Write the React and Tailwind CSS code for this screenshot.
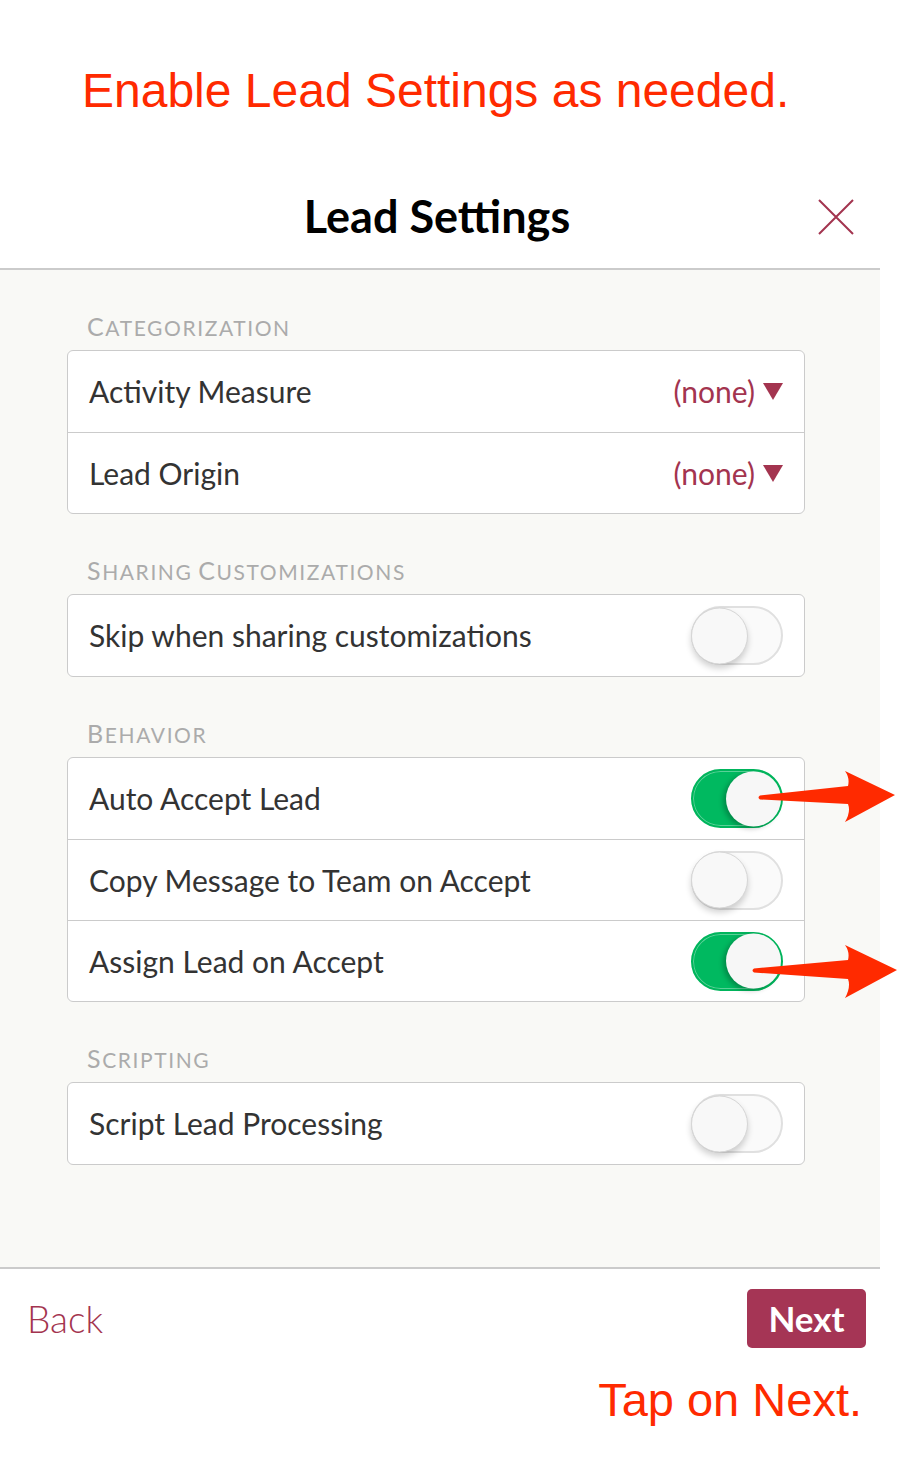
import React from "react";

const ui = { fontFamily: "Lato, 'Open Sans', sans-serif" };
const arial = { fontFamily: "'Liberation Sans', Arial, sans-serif" };

function Toggle({ on }) {
  if (on) {
    return (
      <div className="relative h-[59px] w-[92px] shrink-0 rounded-full border-2 border-[#00b55c] bg-[#00b960] shadow-[inset_0_0_0_1px_rgba(255,255,255,0.35)]">
        <div className="absolute right-[0px] top-1/2 h-[55px] w-[55px] -translate-y-1/2 rounded-full bg-[#f7f7f7] shadow-[-3px_2px_5px_rgba(0,0,0,0.25)]" />
      </div>
    );
  }
  return (
    <div className="relative h-[59px] w-[92px] shrink-0 rounded-full border-2 border-[#e0e0e0] bg-[#fafafa]">
      <div className="absolute left-[-2px] top-1/2 h-[57px] w-[57px] -translate-y-1/2 rounded-full border border-[#d6d6d6] bg-[#f8f8f8] shadow-[0_4px_6px_rgba(0,0,0,0.18)]" />
    </div>
  );
}

function Select() {
  return (
    <div className="flex items-center gap-[8px] text-[30px] text-[#a3344f]">
      <span>(none)</span>
      <svg width="20" height="17" viewBox="0 0 20 17">
        <polygon points="0,0 20,0 10,17" fill="#a3344f" />
      </svg>
    </div>
  );
}

function Row({ label, right, first }) {
  return (
    <div
      className={`flex h-[81px] items-center justify-between pl-[21px] pr-[21px] ${
        first ? "" : "border-t border-[#cbcbcb]"
      }`}
    >
      <span className="text-[30px] text-[#333333]">{label}</span>
      {right}
    </div>
  );
}

function SmallCaps({ text }) {
  return (
    <span>
      {text.split(" ").map((w, i) => (
        <span key={i}>
          {i > 0 ? " " : ""}
          <span className="text-[25px]">{w[0]}</span>
          <span className="text-[21px] uppercase">{w.slice(1)}</span>
        </span>
      ))}
    </span>
  );
}

function Section({ title, rows }) {
  return (
    <div>
      <div className="flex h-[80px] flex-col justify-end pb-[11px] pl-[20px]">
        <div className="leading-none tracking-[1.6px] text-[#ababab]">
          <SmallCaps text={title} />
        </div>
      </div>
      <div className="rounded-[6px] border border-[#cbcbcb] bg-white">
        {rows.map((r, i) => (
          <Row key={i} first={i === 0} label={r.label} right={r.right} />
        ))}
      </div>
    </div>
  );
}

export default function App() {
  return (
    <div className="relative h-[1480px] w-[898px] overflow-hidden bg-white" style={ui}>
      <div className="w-[880px]">
        <div className="h-[164px] pt-[67px] pl-[82px]">
          <div className="text-[48px] leading-none text-[#ff2a00]" style={arial}>
            Enable Lead Settings as needed.
          </div>
        </div>
        <div className="grid h-[106px] grid-cols-[1fr_auto_1fr] items-center border-b-2 border-[#cbcbcb] pt-[2px]">
          <div />
          <div className="pr-[6px] text-[45px] font-bold text-black">Lead Settings</div>
          <div className="flex justify-end pr-[26px]">
            <svg width="36" height="36" viewBox="0 0 36 36">
              <path d="M1 1 L35 35 M35 1 L1 35" stroke="#a3344f" strokeWidth="2" fill="none" />
            </svg>
          </div>
        </div>
        <div className="h-[997px] bg-[#f9f9f6] pl-[67px] pr-[75px]">
          <Section
            title="Categorization"
            rows={[
              { label: "Activity Measure", right: <Select /> },
              { label: "Lead Origin", right: <Select /> },
            ]}
          />
          <Section
            title="Sharing Customizations"
            rows={[{ label: "Skip when sharing customizations", right: <Toggle /> }]}
          />
          <Section
            title="Behavior"
            rows={[
              { label: "Auto Accept Lead", right: <Toggle on /> },
              { label: "Copy Message to Team on Accept", right: <Toggle /> },
              { label: "Assign Lead on Accept", right: <Toggle on /> },
            ]}
          />
          <Section
            title="Scripting"
            rows={[{ label: "Script Lead Processing", right: <Toggle /> }]}
          />
        </div>
        <div className="border-t-2 border-[#cbcbcb]" />
      </div>
      <div className="flex items-center justify-between pl-[27px] pr-[32px] pt-[20px]">
        <span className="text-[37px] font-light text-[#a3344f]">Back</span>
        <div className="flex h-[59px] w-[119px] items-center justify-center rounded-[5px] bg-[#a53555] text-[35px] font-bold text-white">
          Next
        </div>
      </div>
      <div className="mt-[28px] flex justify-end pr-[36px]">
        <span className="text-[47px] leading-none text-[#ff2a00]" style={arial}>
          Tap on Next.
        </span>
      </div>
      <svg
        className="pointer-events-none absolute left-0 top-0"
        width="898"
        height="1480"
        viewBox="0 0 898 1480"
      >
        <path
          d="M760 795.5 L848 786 Q850 778 845 771 L895 795 L845 822 Q851 812 848 804 L760 799.5 Q757 797.5 760 795.5 Z"
          fill="#ff2a00"
        />
        <path
          d="M754 968.5 L848 960 Q850 952 845 945 L897 970 L845 998 Q851 987 848 979 L754 972.5 Q751 970.5 754 968.5 Z"
          fill="#ff2a00"
        />
      </svg>
    </div>
  );
}
